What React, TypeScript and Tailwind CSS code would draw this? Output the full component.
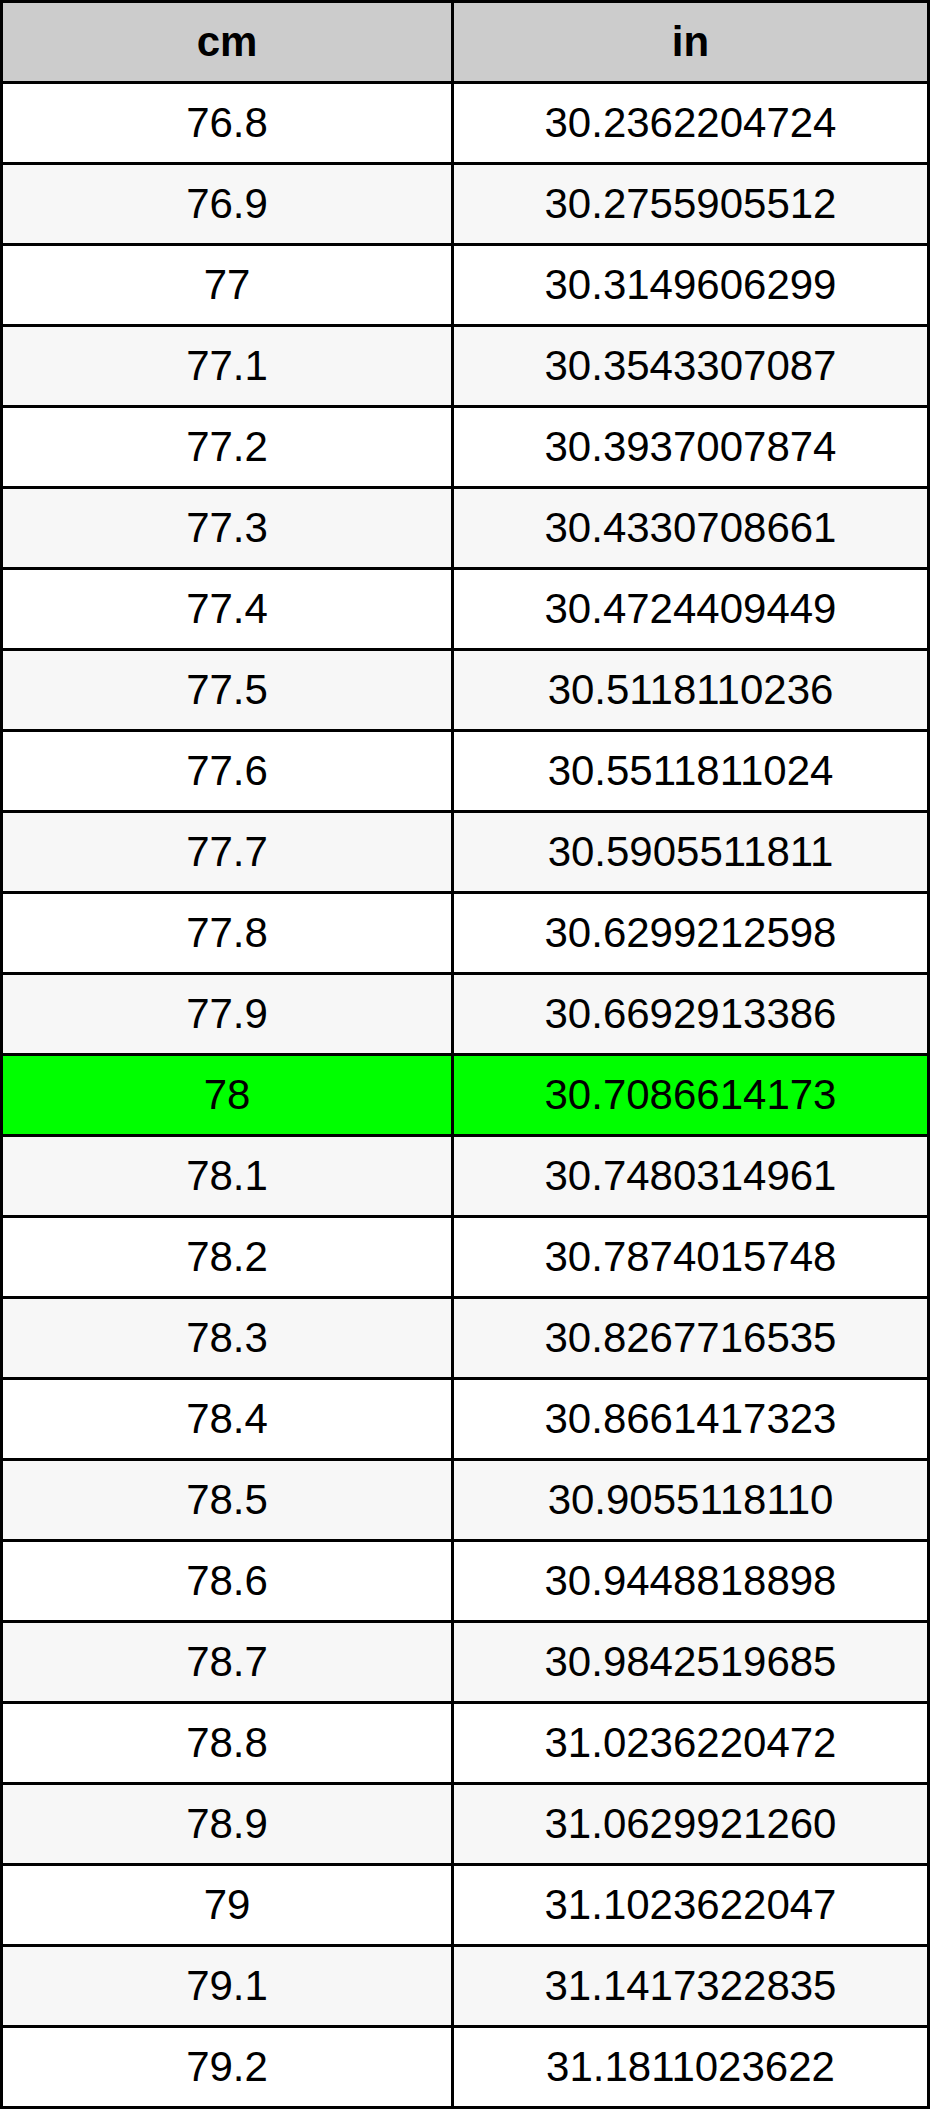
const rows: [string, string][] = [
  ["76.8", "30.2362204724"],
  ["76.9", "30.2755905512"],
  ["77", "30.3149606299"],
  ["77.1", "30.3543307087"],
  ["77.2", "30.3937007874"],
  ["77.3", "30.4330708661"],
  ["77.4", "30.4724409449"],
  ["77.5", "30.5118110236"],
  ["77.6", "30.5511811024"],
  ["77.7", "30.5905511811"],
  ["77.8", "30.6299212598"],
  ["77.9", "30.6692913386"],
  ["78", "30.7086614173"],
  ["78.1", "30.7480314961"],
  ["78.2", "30.7874015748"],
  ["78.3", "30.8267716535"],
  ["78.4", "30.8661417323"],
  ["78.5", "30.9055118110"],
  ["78.6", "30.9448818898"],
  ["78.7", "30.9842519685"],
  ["78.8", "31.0236220472"],
  ["78.9", "31.0629921260"],
  ["79", "31.1023622047"],
  ["79.1", "31.1417322835"],
  ["79.2", "31.1811023622"],
];

function Cell({ children, bg, bold }: { children: string; bg: string; bold?: boolean }) {
  return (
    <div className={`flex items-center justify-center ${bg} ${bold ? "font-bold" : ""}`}>
      {children}
    </div>
  );
}

export default function App() {
  return (
    <div className="w-[930px] bg-white">
      <div
        className="grid grid-cols-[448px_473px] auto-rows-[78px] gap-[3px] bg-black p-[3px] text-[42px] leading-none text-black"
        style={{ fontFamily: '"Liberation Sans", Arial, sans-serif' }}
      >
        <Cell bg="bg-[#cccccc]" bold>cm</Cell>
        <Cell bg="bg-[#cccccc]" bold>in</Cell>
        {rows.map(([cm, inch], i) => {
          const bg = cm === "78" ? "bg-[#00ff00]" : i % 2 === 0 ? "bg-white" : "bg-[#f7f7f7]";
          return [
            <Cell key={cm + "a"} bg={bg}>{cm}</Cell>,
            <Cell key={cm + "b"} bg={bg}>{inch}</Cell>,
          ];
        })}
      </div>
    </div>
  );
}
